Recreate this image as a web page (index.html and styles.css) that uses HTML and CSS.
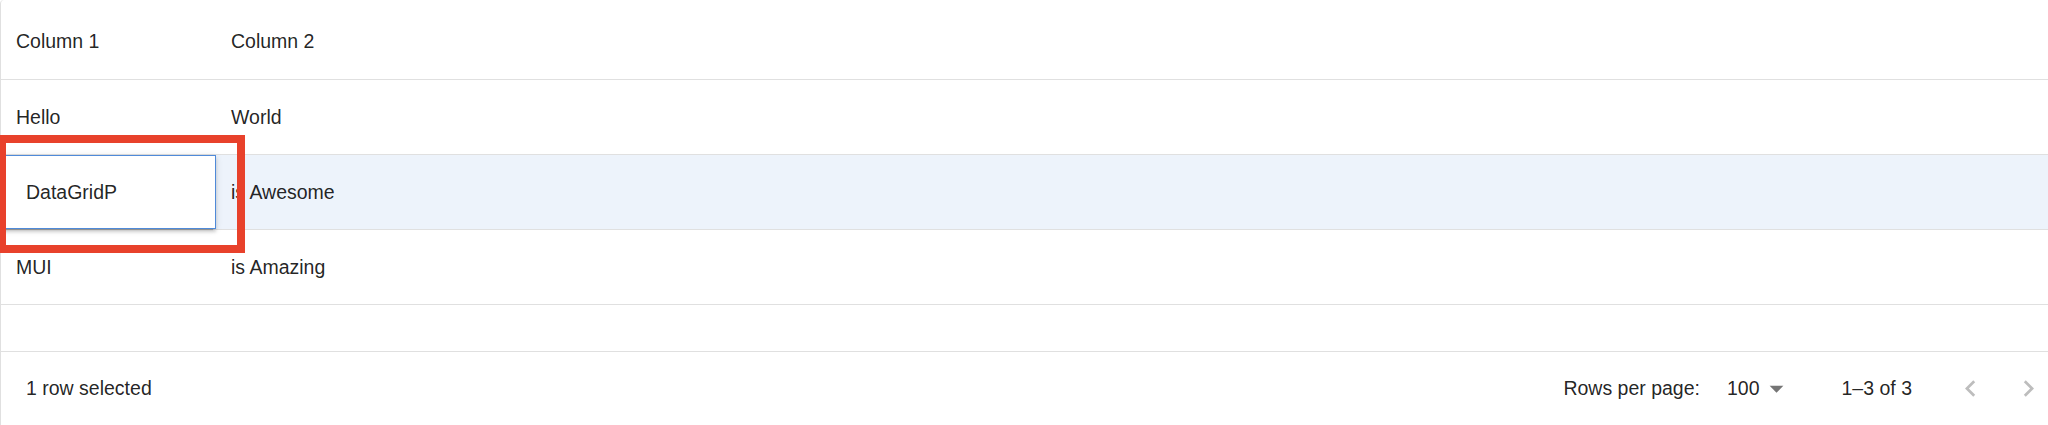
FILE: index.html
```html
<!DOCTYPE html>
<html lang="en">
<head>
<meta charset="utf-8">
<title>DataGrid</title>
<link rel="stylesheet" href="styles.css">
</head>
<body>
<div class="page">
  <div class="grid">
    <div class="row header">
      <div class="cell c1">Column 1</div>
      <div class="cell c2">Column 2</div>
    </div>
    <div class="row">
      <div class="cell c1">Hello</div>
      <div class="cell c2">World</div>
    </div>
    <div class="row selected">
      <div class="cell c1 editing">DataGridP</div>
      <div class="cell c2">is Awesome</div>
    </div>
    <div class="row">
      <div class="cell c1">MUI</div>
      <div class="cell c2">is Amazing</div>
    </div>
    <div class="filler"></div>
    <div class="footer">
      <div class="selected-count">1 row selected</div>
      <div class="pagination">
        <span class="rpp">Rows per page:</span>
        <span class="select">100<svg viewBox="0 0 24 24"><path d="M7 10l5 5 5-5z"/></svg></span>
        <span class="range">1–3 of 3</span>
        <div class="actions">
          <span class="btn"><svg viewBox="0 0 24 24"><path d="M15.41 16.59 10.83 12l4.58-4.59L14 6l-6 6 6 6 1.41-1.41z"/></svg></span>
          <span class="btn"><svg viewBox="0 0 24 24"><path d="M8.59 16.59 13.17 12 8.59 7.41 10 6l6 6-6 6-1.41-1.41z"/></svg></span>
        </div>
      </div>
    </div>
  </div>
  <div class="annotation"></div>
</div>
</body>
</html>
```
FILE: styles.css
```css
html, body {
  margin: 0;
  overflow: hidden;
  background: #fff;
}
body {
  font-family: "Liberation Sans", Arial, sans-serif;
  font-size: 19.5px;
  color: rgba(0, 0, 0, 0.87);
}
.page {
  position: relative;
  width: 100%;
  height: 425px;
}
.grid {
  width: calc(100% + 10px);
  height: 425px;
  border-left: 1px solid #e0e0e0;
  border-top-left-radius: 4px;
  box-sizing: border-box;
  display: flex;
  flex-direction: column;
}
.row {
  display: flex;
  flex: none;
  height: 75px;
  border-bottom: 1px solid #e0e0e0;
  box-sizing: border-box;
}
.header {
  height: 80px;
  padding-top: 4px;
}
.cell {
  display: flex;
  align-items: center;
  box-sizing: border-box;
  padding: 0 15px;
  white-space: nowrap;
}
.c1 {
  width: 215px;
  flex: none;
}
.c2 {
  flex: 1;
}
.selected {
  background: #edf3fb;
}
.editing {
  position: relative;
  z-index: 1;
  background: #fff;
  border: 1px solid #4f8ad9;
  padding-left: 24px;
  box-shadow: 0 4px 1px -3px rgba(0, 0, 0, 0.2), 0 3px 3px 0 rgba(0, 0, 0, 0.14), 0 1px 7px 0 rgba(0, 0, 0, 0.12);
}
.filler {
  flex: none;
  height: 46px;
}
.footer {
  flex: 1;
  border-top: 1px solid #e0e0e0;
  display: flex;
  align-items: center;
  justify-content: space-between;
  padding-left: 25px;
}
.pagination {
  display: flex;
  align-items: center;
  padding-right: 2px;
}
.rpp {
  margin-right: 27px;
}
.select {
  display: flex;
  align-items: center;
  margin-right: 49px;
}
.select svg {
  width: 33px;
  height: 33px;
  fill: rgba(0, 0, 0, 0.54);
}
.range {
  margin-right: 30px;
}
.actions {
  display: flex;
  gap: 2px;
}
.btn {
  width: 56px;
  height: 56px;
  display: flex;
  align-items: center;
  justify-content: center;
}
.btn svg {
  width: 33px;
  height: 33px;
  fill: rgba(0, 0, 0, 0.26);
}
.annotation {
  position: absolute;
  left: -2px;
  top: 135px;
  width: 247px;
  height: 118px;
  border: 8px solid #e8412b;
  box-sizing: border-box;
  z-index: 2;
}
```
